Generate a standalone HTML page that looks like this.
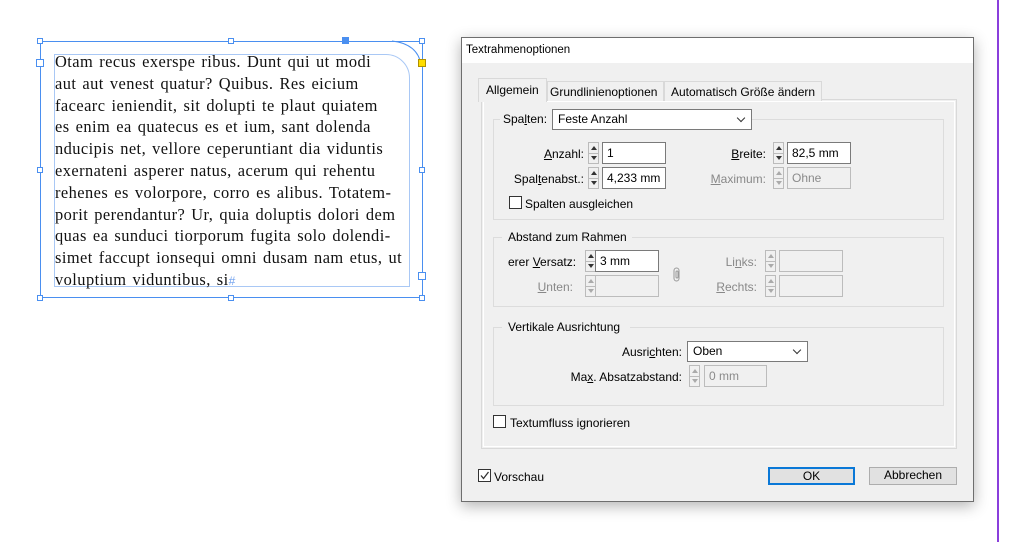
<!DOCTYPE html>
<html><head><meta charset="utf-8"><style>
*{box-sizing:border-box;margin:0;padding:0}
body{width:1026px;height:542px;background:#fff;position:relative;overflow:hidden;font-family:"Liberation Sans",sans-serif;font-size:12px;color:#000}
.a{position:absolute}
.h{position:absolute;width:6px;height:6px;border:1px solid #4a8ff0;background:#fff}
.txt{position:absolute;left:55px;top:51px;width:360px;font-family:"Liberation Serif",serif;font-size:16.4px;letter-spacing:0.45px;word-spacing:1.5px;line-height:21.8px;color:#111;white-space:nowrap}
.txt b{font-weight:normal;color:#8ab4f0;font-size:9px;letter-spacing:0;vertical-align:2px;margin:0 1px}
.dlg{position:absolute;left:461px;top:37px;width:513px;height:465px;background:#f0f0f0;border:1px solid #6e6e6e;box-shadow:0 4px 14px rgba(0,0,0,.3)}
.grp{position:absolute;border:1px solid #dcdcdc}
.lbl{position:absolute;white-space:nowrap;font-size:12px}
.dis{color:#888}
.inp{position:absolute;background:#fff;border:1px solid #7a7a7a;height:22px;padding:3px 4px;font-size:12px}
.inp.d{background:#f0f0f0;border-color:#bcbcbc;color:#8a8a8a}
.sp{position:absolute;width:11px;height:22px;border:1px solid #bbb;background:#f0f0f0}
.sp:before{content:"";position:absolute;left:2px;top:3px;border:3px solid transparent;border-bottom:4px solid #333;border-top:0}
.sp:after{content:"";position:absolute;left:2px;bottom:3px;border:3px solid transparent;border-top:4px solid #333;border-bottom:0}
.sp i{position:absolute;left:0;right:0;top:10px;border-top:1px solid #bbb}
.sp.d:before{border-bottom-color:#aaa}.sp.d:after{border-top-color:#aaa}
.sel{position:absolute;background:#fff;border:1px solid #7a7a7a;height:21px;padding:2px 5px;font-size:12px}
.sel:after{content:"";position:absolute;right:7px;top:5px;width:5px;height:5px;border-right:1px solid #333;border-bottom:1px solid #333;transform:rotate(45deg)}
.cb{position:absolute;width:13px;height:13px;border:1px solid #333;background:#fff}
.btn{position:absolute;height:18px;background:#e1e1e1;border:1px solid #adadad;text-align:center;font-size:12px;line-height:15px}
u{text-decoration:underline}
</style></head><body>
<div class="a" style="left:40px;top:41px;width:383px;height:257px;border:1px solid #4a8ff0"></div>
<div class="a" style="left:54px;top:54px;width:356px;height:233px;border:1px solid #a9c8f5;border-top-right-radius:24px"></div>
<svg class="a" style="left:385px;top:38px" width="40" height="30"><path d="M7 3 Q33 6 36 27" fill="none" stroke="#4a8ff0" stroke-width="1"/></svg>
<div class="h" style="left:37px;top:38px"></div><div class="h" style="left:228px;top:38px"></div>
<div class="a" style="left:342px;top:37px;width:7px;height:7px;background:#4a8ff0"></div>
<div class="h" style="left:419px;top:38px"></div>
<div class="a" style="left:418px;top:59px;width:8px;height:8px;background:#ffdd00;border:1px solid #b09000"></div>
<div class="h" style="left:36px;top:59px;width:8px;height:8px"></div>
<div class="h" style="left:37px;top:167px"></div><div class="h" style="left:419px;top:167px"></div>
<div class="h" style="left:418px;top:272px;width:8px;height:8px"></div>
<div class="h" style="left:37px;top:295px"></div><div class="h" style="left:228px;top:295px"></div><div class="h" style="left:419px;top:295px"></div>
<div class="txt">Otam recus exerspe ribus. Dunt qui ut modi<br>aut aut venest quatur? Quibus. Res eicium<br>facearc ieniendit, sit dolupti te plaut quiatem<br>es enim ea quatecus es et ium, sant dolenda<br>nducipis net, vellore ceperuntiant dia viduntis<br>exernateni asperer natus, acerum qui rehentu<br>rehenes es volorpore, corro es alibus. Totatem-<br>porit perendantur? Ur, quia doluptis dolori dem<br>quas ea sunduci tiorporum fugita solo dolendi-<br>simet faccupt ionsequi omni dusam nam etus, ut<br>voluptium viduntibus, si<span style="color:#6fa0ee;font-family:'Liberation Sans';font-size:12px">#</span></div>
<div class="a" style="left:997px;top:0;width:2px;height:542px;background:#8a3fdc"></div>

<div class="dlg">
<div class="a" style="left:0;top:0;width:511px;height:25px;background:#fff"></div>
<div class="lbl" style="left:4px;top:6px;font-size:11.5px">Textrahmenoptionen</div>
<div class="a" style="left:19px;top:61px;width:476px;height:350px;border:1px solid #d9d9d9;background:#f0f0f0"></div>
<div class="a" style="left:21px;top:63px;width:472px;height:346px;border:1px solid #fff"></div>
<div class="a" style="left:85px;top:43px;width:117px;height:20px;border:1px solid #d9d9d9;border-bottom:0;background:#f0f0f0"></div>
<div class="a" style="left:202px;top:43px;width:158px;height:20px;border:1px solid #d9d9d9;border-bottom:0;background:#f0f0f0"></div>
<div class="a" style="left:16px;top:40px;width:69px;height:24px;border:1px solid #d9d9d9;border-bottom:0;background:#f0f0f0"></div>
<div class="lbl" style="left:24px;top:45px">Allgemein</div>
<div class="lbl" style="left:88px;top:47px">Grundlinienoptionen</div>
<div class="lbl" style="left:209px;top:47px">Automatisch Größe ändern</div>

<div class="grp" style="left:31px;top:81px;width:451px;height:101px"></div>
<div class="a" style="left:38px;top:74px;width:252px;height:14px;background:#f0f0f0"></div>
<div class="lbl" style="left:41px;top:74px">Spa<u>l</u>ten:</div>
<div class="sel" style="left:90px;top:71px;width:200px">Feste Anzahl</div>
<div class="lbl" style="left:0;top:109px;width:122px;text-align:right"><u>A</u>nzahl:</div>
<div class="sp" style="left:126px;top:104px"><i></i></div><div class="inp" style="left:140px;top:104px;width:64px">1</div>
<div class="lbl" style="left:0;top:134px;width:122px;text-align:right">Spal<u>t</u>enabst.:</div>
<div class="sp" style="left:126px;top:129px"><i></i></div><div class="inp" style="left:140px;top:129px;width:64px">4,233 mm</div>
<div class="lbl" style="left:200px;top:109px;width:104px;text-align:right"><u>B</u>reite:</div>
<div class="sp" style="left:311px;top:104px"><i></i></div><div class="inp" style="left:325px;top:104px;width:64px">82,5 mm</div>
<div class="lbl dis" style="left:200px;top:134px;width:104px;text-align:right"><u>M</u>aximum:</div>
<div class="sp d" style="left:311px;top:129px"><i></i></div><div class="inp d" style="left:325px;top:129px;width:64px">Ohne</div>
<div class="cb" style="left:47px;top:158px"></div><div class="lbl" style="left:63px;top:159px">Spalten ausgleichen</div>

<div class="grp" style="left:31px;top:199px;width:451px;height:70px"></div>
<div class="a" style="left:40px;top:192px;width:130px;height:14px;background:#f0f0f0"></div>
<div class="lbl" style="left:46px;top:192px">Abstand zum Rahmen</div>
<div class="lbl" style="left:46px;top:217px">erer <u>V</u>ersatz:</div>
<div class="sp" style="left:123px;top:212px"><i></i></div><div class="inp" style="left:133px;top:212px;width:64px">3 mm</div>
<div class="lbl dis" style="left:40px;top:242px;width:71px;text-align:right"><u>U</u>nten:</div>
<div class="sp d" style="left:123px;top:237px"><i></i></div><div class="inp d" style="left:133px;top:237px;width:64px"></div>
<svg class="a" style="left:210px;top:228px" width="10" height="18"><rect x="2" y="2" width="5" height="13" rx="2.5" fill="none" stroke="#999"/><rect x="4" y="5" width="2" height="7" rx="1" fill="none" stroke="#999"/></svg>
<div class="lbl dis" style="left:200px;top:217px;width:95px;text-align:right">Li<u>n</u>ks:</div>
<div class="sp d" style="left:303px;top:212px"><i></i></div><div class="inp d" style="left:317px;top:212px;width:64px"></div>
<div class="lbl dis" style="left:200px;top:242px;width:95px;text-align:right"><u>R</u>echts:</div>
<div class="sp d" style="left:303px;top:237px"><i></i></div><div class="inp d" style="left:317px;top:237px;width:64px"></div>

<div class="grp" style="left:31px;top:289px;width:451px;height:79px"></div>
<div class="a" style="left:40px;top:282px;width:128px;height:14px;background:#f0f0f0"></div>
<div class="lbl" style="left:46px;top:282px">Vertikale Ausrichtung</div>
<div class="lbl" style="left:100px;top:307px;width:120px;text-align:right">Ausri<u>c</u>hten:</div>
<div class="sel" style="left:225px;top:303px;width:121px">Oben</div>
<div class="lbl" style="left:60px;top:332px;width:160px;text-align:right">Ma<u>x</u>. Absatzabstand:</div>
<div class="sp d" style="left:227px;top:327px"><i></i></div><div class="inp d" style="left:242px;top:327px;width:63px">0 mm</div>

<div class="cb" style="left:31px;top:377px"></div><div class="lbl" style="left:48px;top:378px">Textumfluss ignorieren</div>

<div class="cb" style="left:16px;top:431px"></div>
<svg class="a" style="left:17px;top:432px" width="11" height="11"><path d="M2 5.5 L4.5 8.5 L9.5 2" fill="none" stroke="#333" stroke-width="1.3"/></svg>
<div class="lbl" style="left:32px;top:432px">Vorschau</div>
<div class="btn" style="left:306px;top:429px;width:87px;border:2px solid #0a78d7;line-height:14px">OK</div>
<div class="btn" style="left:407px;top:429px;width:88px">Abbrechen</div>
</div>
</body></html>
